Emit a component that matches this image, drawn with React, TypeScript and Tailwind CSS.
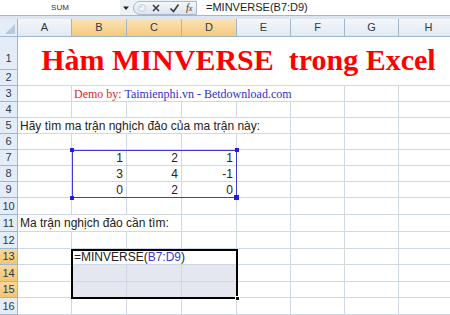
import React from 'react'
import clsx from 'clsx'

type CellSpec = {
  text?: React.ReactNode
  num?: boolean
  open?: boolean
  fill?: boolean
}

const COLS = ['A', 'B', 'C', 'D', 'E', 'F', 'G', 'H']
const COL_W = ['w-[54px]', 'w-[55px]', 'w-[55px]', 'w-[55px]', 'w-[54px]', 'w-[54px]', 'w-[54px]', 'w-[60px]']
const SELECTED_COLS = ['B', 'C', 'D']

const arial = "font-['Liberation_Sans',Arial,sans-serif]"
const times = "font-['Liberation_Serif','Times_New_Roman',serif]"

function RowHead({ n, active }: { n: number; active?: boolean }) {
  return (
    <div
      className={clsx(
        'flex w-[18px] shrink-0 items-center justify-center border-r border-b border-[#9eb6ce] text-[11px] text-[#2e3a4a]',
        active ? 'bg-gradient-to-b from-[#f9d99f] to-[#f3c56f]' : 'bg-[#e4ecf7]'
      )}
    >
      {n}
    </div>
  )
}

function Row({ n, h, cells = [], active }: { n: number; h: string; cells?: CellSpec[]; active?: boolean }) {
  return (
    <div className={clsx('flex', h)}>
      <RowHead n={n} active={active} />
      {COL_W.map((w, i) => {
        const c = cells[i] ?? {}
        return (
          <div
            key={i}
            className={clsx(
              w,
              'flex shrink-0 items-center border-b border-[#d0d7e5] text-[12px] text-[#222]',
              !c.open && 'border-r',
              c.fill && 'bg-[#e4e6f0]',
              c.num ? 'justify-end pr-[3px]' : 'pl-[2px]'
            )}
          >
            {c.text !== undefined && <span className="whitespace-nowrap">{c.text}</span>}
          </div>
        )
      })}
    </div>
  )
}

function FormulaBar() {
  return (
    <div className="flex h-[16px] items-center border-b border-[#a4b6cc] bg-[#eef2f7]">
      <div className="flex h-full w-[120px] items-center justify-center bg-white text-[8px] text-[#333]">SUM</div>
      <svg width="8" height="6" viewBox="0 0 8 6" className="ml-[2px]">
        <path d="M1 1.5h6L4 5z" fill="#222" />
      </svg>
      <div className="ml-[3px] flex h-[14px] w-[64px] items-center rounded-l-full border border-[#a9b8cc] bg-gradient-to-b from-[#f4f7fb] to-[#dce4ef]">
        <svg width="10" height="10" viewBox="0 0 10 10" className="ml-[3px]">
          <circle cx="5" cy="5" r="3.5" fill="#f2f4f7" stroke="#c3cbd6" />
          <circle cx="4" cy="4" r="1" fill="#c9d0da" />
        </svg>
        <svg width="10" height="10" viewBox="0 0 10 10" className="ml-[4px]">
          <path d="M2 2l6 6M8 2l-6 6" stroke="#3a3a3a" strokeWidth="1.6" />
        </svg>
        <svg width="11" height="10" viewBox="0 0 11 10" className="ml-[8px]">
          <path d="M1.5 5.5l3 3 5-7" stroke="#3a3a3a" strokeWidth="1.6" fill="none" />
        </svg>
        <span className={clsx(times, 'ml-[6px] text-[10px] italic leading-none text-[#333]')}>
          f<span className="text-[8px]">x</span>
        </span>
      </div>
      <div className="flex h-full flex-1 items-center bg-white pl-[9px] text-[11px] text-[#222]">=MINVERSE(B7:D9)</div>
    </div>
  )
}

function ColumnHeaders() {
  return (
    <div className="flex h-[18px]">
      <div className="relative w-[18px] shrink-0 border-r border-b border-[#9eb6ce] bg-[#e4ecf7]">
        <svg width="10" height="10" viewBox="0 0 10 10" className="absolute right-[2px] bottom-[2px]">
          <path d="M10 0v10H0z" fill="#b9c8da" />
        </svg>
      </div>
      {COLS.map((c, i) => (
        <div
          key={c}
          className={clsx(
            COL_W[i],
            'flex shrink-0 items-center justify-center border-r border-b border-[#9eb6ce] text-[11px] text-[#2e3a4a]',
            SELECTED_COLS.includes(c)
              ? 'bg-gradient-to-b from-[#fbe3b4] to-[#f5c97e]'
              : 'bg-gradient-to-b from-[#f4f7fb] to-[#e1e9f4]'
          )}
        >
          {c}
        </div>
      ))}
    </div>
  )
}

export default function App() {
  return (
    <div className={clsx(arial, 'relative h-[315px] w-[450px] overflow-hidden bg-white')}>
      <FormulaBar />
      <div className="h-[3px] bg-[#dde5ef]" />
      <ColumnHeaders />

      {/* rows 1-2, A1:H2 merged title */}
      <div className="flex h-[49px]">
        <div className="flex w-[18px] shrink-0 flex-col">
          <div className="flex h-[33px] items-center justify-center border-r border-b border-[#9eb6ce] bg-[#e4ecf7] pt-[10px] text-[11px] text-[#2e3a4a]">
            1
          </div>
          <div className="flex h-[16px] items-center justify-center border-r border-b border-[#9eb6ce] bg-[#e4ecf7] text-[11px] text-[#2e3a4a]">
            2
          </div>
        </div>
        <div className="flex w-[441px] shrink-0 justify-center border-b border-[#d0d7e5] pt-[8px]">
          <span className={clsx(times, 'whitespace-pre text-[30px] leading-[30px] font-bold text-[#ff0000]')}>
            Hàm MINVERSE  trong Excel
          </span>
        </div>
      </div>

      <Row
        n={3}
        h="h-[16px]"
        cells={[
          {},
          {
            open: true,
            text: (
              <span className={clsx(times, 'text-[12px]')}>
                <span className="text-[#e02828]">Demo by: </span>
                <span className="text-[#3030c8]">Taimienphi.vn - Betdownload.com</span>
              </span>
            ),
          },
          { open: true },
          { open: true },
          { open: true },
        ]}
      />
      <Row n={4} h="h-[16px]" />
      <Row
        n={5}
        h="h-[16px]"
        cells={[
          { open: true, text: 'Hãy tìm ma trận nghịch đảo của ma trận này:' },
          { open: true },
          { open: true },
          { open: true },
        ]}
      />
      <Row n={6} h="h-[16px]" />
      <Row n={7} h="h-[16px]" cells={[{}, { num: true, text: '1' }, { num: true, text: '2' }, { num: true, text: '1' }]} />
      <Row n={8} h="h-[16px]" cells={[{}, { num: true, text: '3' }, { num: true, text: '4' }, { num: true, text: '-1' }]} />
      <Row n={9} h="h-[16px]" cells={[{}, { num: true, text: '0' }, { num: true, text: '2' }, { num: true, text: '0' }]} />
      <Row n={10} h="h-[17px]" />
      <Row n={11} h="h-[17px]" cells={[{ open: true, text: 'Ma trận nghịch đảo cần tìm:' }, { open: true }]} />
      <Row n={12} h="h-[17px]" />
      <Row
        n={13}
        h="h-[16px]"
        active
        cells={[
          {},
          {
            open: true,
            text: (
              <>
                =MINVERSE(<span className="text-[#3a3ad0]">B7:D9</span>)
              </>
            ),
          },
          { open: true },
        ]}
      />
      <Row n={14} h="h-[17px]" active cells={[{}, { fill: true }, { fill: true }, { fill: true }]} />
      <Row n={15} h="h-[16px]" active cells={[{}, { fill: true }, { fill: true }, { fill: true }]} />
      <Row n={16} h="h-[17px]" />

      {/* reference range B7:D9 */}
      <div className="absolute top-[150px] left-[72px] h-[48px] w-[165px] border-[1.5px] border-[#3c3cd0]">
        <div className="absolute -top-[3px] -left-[3px] h-[4px] w-[4px] bg-[#2020d8]" />
        <div className="absolute -top-[3px] -right-[3px] h-[4px] w-[4px] bg-[#2020d8]" />
        <div className="absolute -bottom-[3px] -left-[3px] h-[4px] w-[4px] bg-[#2020d8]" />
        <div className="absolute -right-[3px] -bottom-[3px] h-[5px] w-[5px] bg-[#2020d8]" />
      </div>

      {/* selection B13:D15 */}
      <div className="absolute top-[249px] left-[71px] h-[50px] w-[167px] border-2 border-black">
        <div className="absolute -right-[4px] -bottom-[4px] h-[5px] w-[5px] border border-white bg-black" />
      </div>
    </div>
  )
}
